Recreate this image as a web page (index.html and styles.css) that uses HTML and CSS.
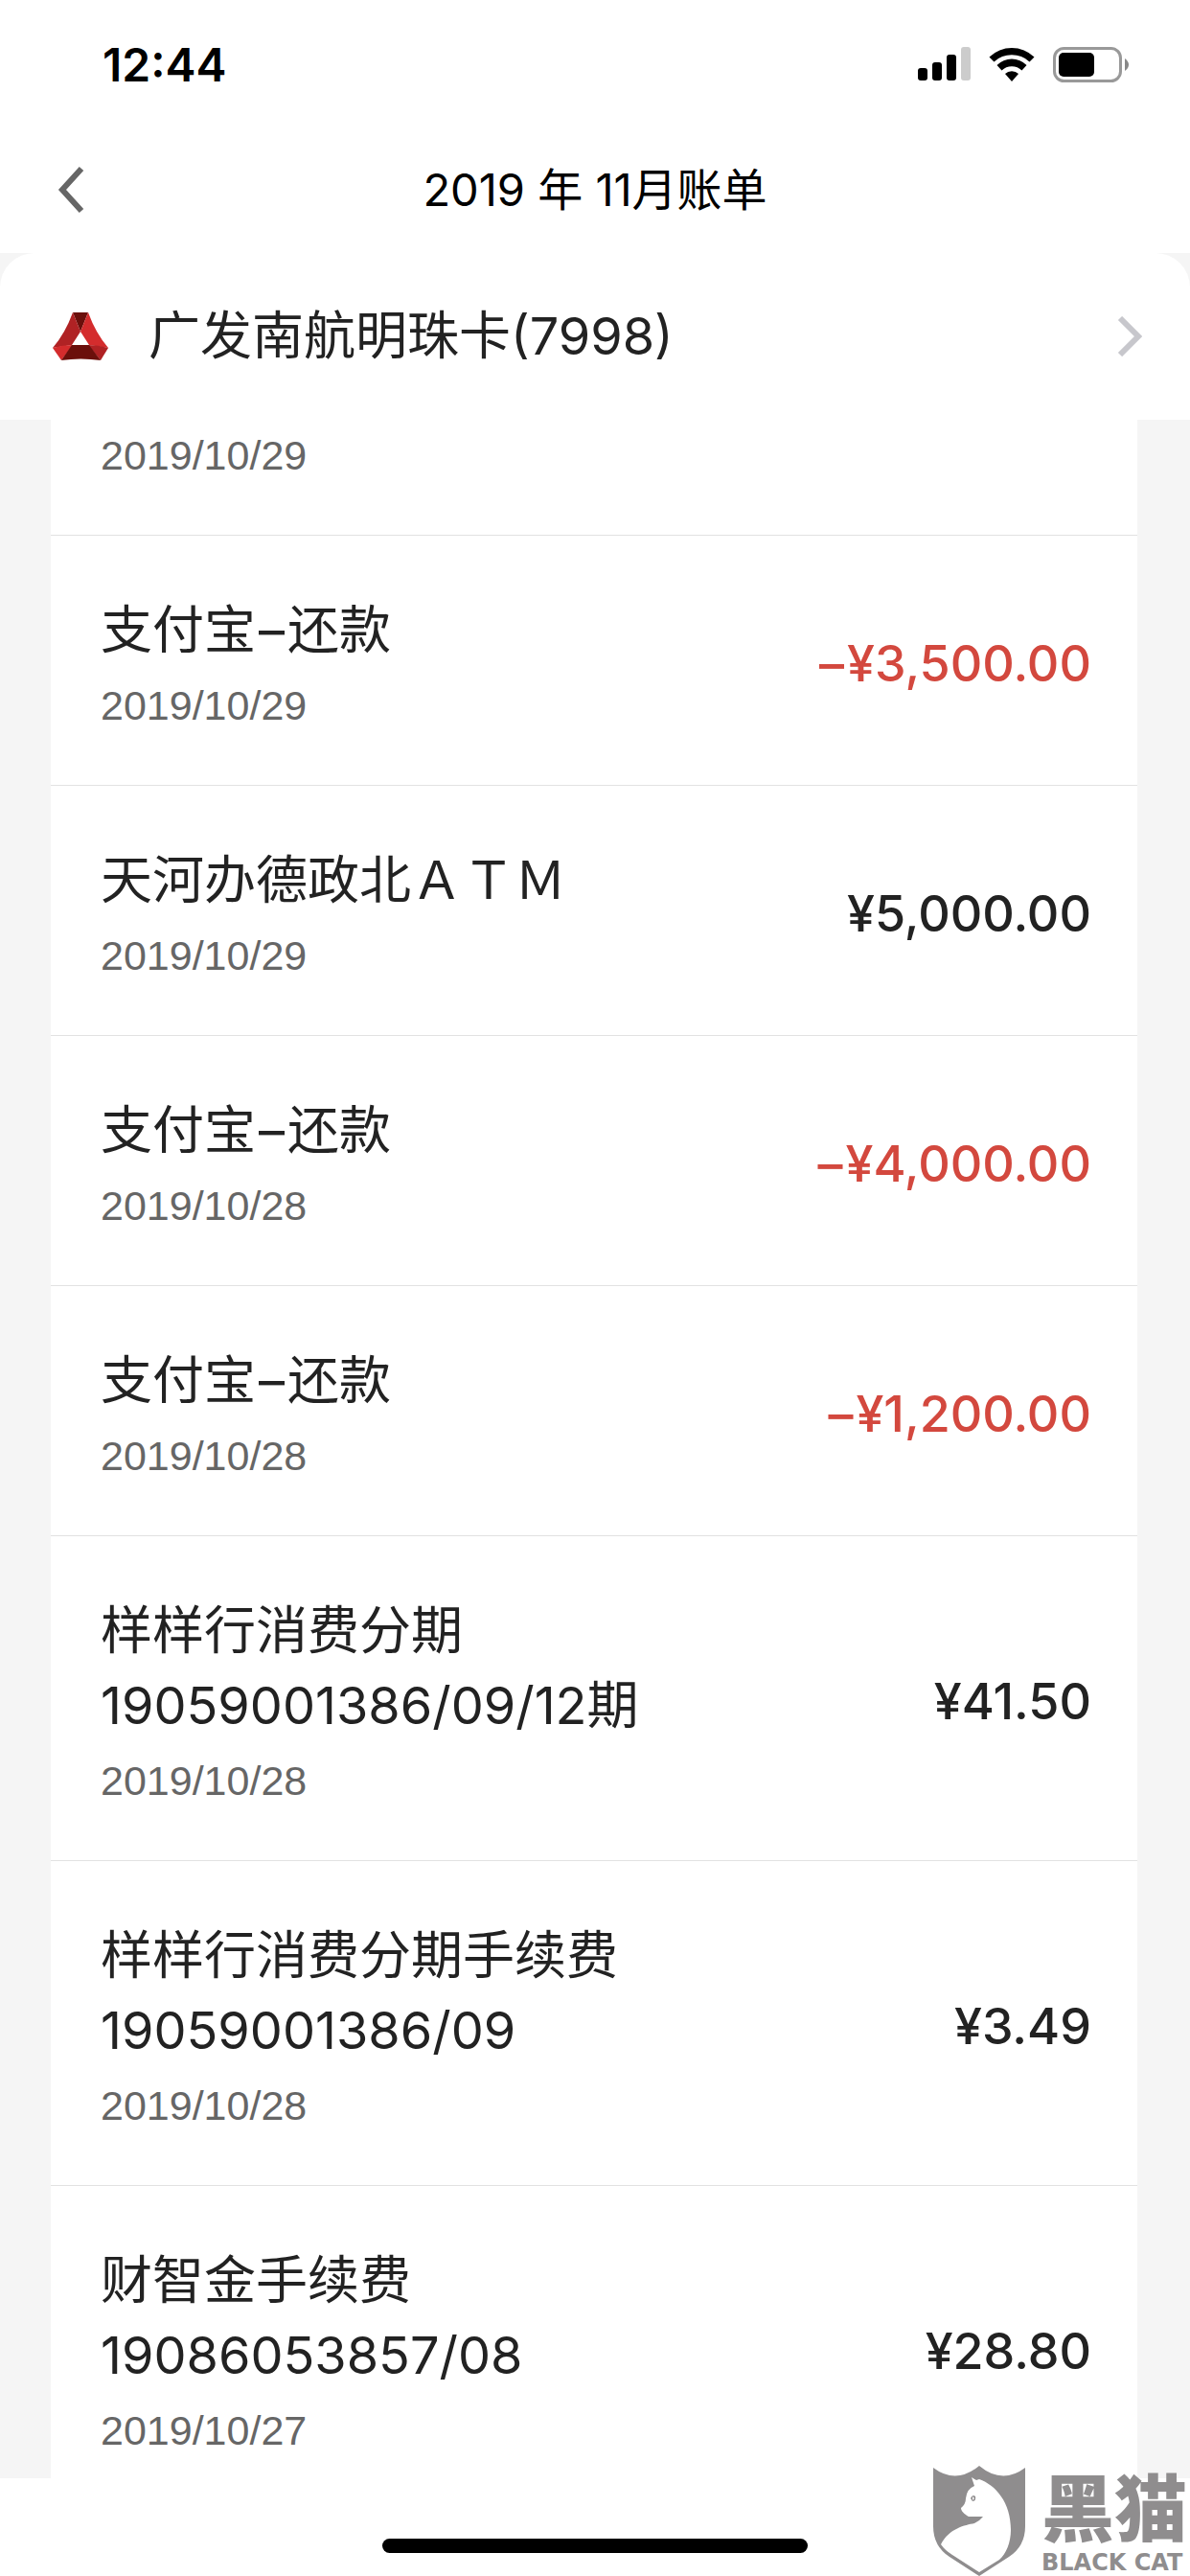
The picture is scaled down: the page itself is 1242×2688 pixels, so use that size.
FILE: index.html
```html
<!DOCTYPE html>
<html lang="zh-CN">
<head>
    <meta charset="UTF-8">
    <meta name="viewport" content="width=device-width, initial-scale=1.0">
    <title>2019年11月账单</title>
    <link rel="stylesheet" href="styles.css">
</head>
<body>
    <div class="status-bar">
        <span class="time">12:44</span>
        <div class="status-icons">
            <svg class="signal" width="55" height="36" viewBox="0 0 55 36">
                <rect x="0" y="22" width="10" height="13" rx="3"/>
                <rect x="15" y="16" width="10" height="19" rx="3"/>
                <rect x="30" y="8" width="10" height="27" rx="3"/>
                <rect x="45" y="0" width="10" height="35" rx="3" fill="#ccc"/>
            </svg>
            <svg class="wifi" width="48" height="36" viewBox="0 0 48 36">
                <path d="M0.500 10.500 A34 34 0 0 1 47.500 10.500 L42.500 15.500 A27 27 0 0 0 5.500 15.500 Z"/>
                <path d="M8.500 19 A22 22 0 0 1 39.500 19 L34.500 24.500 A15 15 0 0 0 13.500 24.500 Z"/>
                <path d="M17 28 A10 10 0 0 1 31 28 L24 36 Z"/>
            </svg>
            <svg class="battery" width="80" height="37" viewBox="0 0 80 37">
                <rect x="1.500" y="1.500" width="69" height="34" rx="10" fill="none" stroke="#999" stroke-width="3"/>
                <rect x="6" y="6" width="37" height="25" rx="5"/>
                <path d="M75 12 Q79 15 79 18.500 Q79 22 75 25 Z" fill="#888"/>
            </svg>
        </div>
    </div>

    <header class="nav-bar">
        <button class="back" type="button" aria-label="返回">
            <svg width="28" height="48" viewBox="0 0 28 48">
                <path d="M25 2 L5 24 L25 46" fill="none" stroke="#666" stroke-width="6"/>
            </svg>
        </button>
        <h1>2019 年 11月账单</h1>
    </header>

    <main class="content">
        <a class="card" href="#">
            <svg class="bank-logo" width="58" height="50" viewBox="0 0 58 50">
                <path d="M21 0 L37 0 L29 20 Z" fill="#6b0f0b"/>
                <path d="M21 0 L29 20 L20 34 L0 37 Q13 22 21 0 Z" fill="#b02224"/>
                <path d="M37 0 Q45 22 58 37 L38 34 L29 20 Z" fill="#d42c2d"/>
                <path d="M0 37 Q10 34 21 34 L9 50 Z" fill="#d42c2d"/>
                <path d="M58 37 Q48 34 37 34 L50 50 Z" fill="#b02224"/>
                <path d="M20 34 L38 34 L50 50 Q29 47 9 50 Z" fill="#6b0f0b"/>
            </svg>
            <span class="card-name">广发南航明珠卡(7998)</span>
            <svg class="arrow" width="26" height="42" viewBox="0 0 26 42">
                <path d="M3 2 L22 21 L3 40" fill="none" stroke="#c7c7cc" stroke-width="6"/>
            </svg>
        </a>

        <ul class="bill-list">
            <li class="bill first">
                <div class="info">
                    <div class="date">2019/10/29</div>
                </div>
            </li>
            <li class="bill">
                <div class="info">
                    <div class="name">支付宝<span class="dash">–</span>还款</div>
                    <div class="date">2019/10/29</div>
                </div>
                <div class="amount refund"><span class="dash">–</span>¥3,500.00</div>
            </li>
            <li class="bill">
                <div class="info">
                    <div class="name">天河办德政北ＡＴＭ</div>
                    <div class="date">2019/10/29</div>
                </div>
                <div class="amount">¥5,000.00</div>
            </li>
            <li class="bill">
                <div class="info">
                    <div class="name">支付宝<span class="dash">–</span>还款</div>
                    <div class="date">2019/10/28</div>
                </div>
                <div class="amount refund"><span class="dash">–</span>¥4,000.00</div>
            </li>
            <li class="bill">
                <div class="info">
                    <div class="name">支付宝<span class="dash">–</span>还款</div>
                    <div class="date">2019/10/28</div>
                </div>
                <div class="amount refund"><span class="dash">–</span>¥1,200.00</div>
            </li>
            <li class="bill">
                <div class="info">
                    <div class="name">样样行消费分期<br>19059001386/09/12期</div>
                    <div class="date">2019/10/28</div>
                </div>
                <div class="amount">¥41.50</div>
            </li>
            <li class="bill">
                <div class="info">
                    <div class="name">样样行消费分期手续费<br>19059001386/09</div>
                    <div class="date">2019/10/28</div>
                </div>
                <div class="amount">¥3.49</div>
            </li>
            <li class="bill">
                <div class="info">
                    <div class="name">财智金手续费<br>19086053857/08</div>
                    <div class="date">2019/10/27</div>
                </div>
                <div class="amount">¥28.80</div>
            </li>
        </ul>
    </main>

    <footer class="home-bar">
        <div class="home-indicator"></div>
    </footer>

    <div class="watermark">
        <svg width="98" height="115" viewBox="0 0 98 115">
            <path d="M1 2 Q25 20 49 0 Q73 20 97 2 L97 63 Q97 84 80 95 L49 115 L18 95 Q1 84 1 63 Z" fill="#8f8d8e"/>
            <path d="M41 12 L46 15 L49 14 C66 20 82 38 82 67 C82 80 77 92 70 98 L49 111 L21 93 Q13 88 9 82 C18 65 34 62 44 60 Q50 57 53 53 L38 53 C33 50 30 47 30 44 Q35 40 35 34 Q36 24 44 21 Z" fill="#fff"/>
            <path d="M40 34 Q42 29 45 32 Q46 37 42 37 Z" fill="#8f8d8e"/>
            <path d="M42 32 L44 34 L42 36 Z" fill="#fff"/>
        </svg>
        <div class="brand">
            <span class="brand-cn">黑猫</span>
            <span class="brand-en">BLACK CAT</span>
        </div>
    </div>
</body>
</html>
```
FILE: styles.css
```css
* {
    box-sizing: border-box;
}
body {
    position: relative;
    margin: 0;
    background-color: #fff;
    color: #222;
    font-family: Inter, "Noto Sans CJK SC", sans-serif;
}
.status-bar {
    display: flex;
    align-items: center;
    justify-content: space-between;
    height: 134px;
    padding: 0 63px 0 107px;
    color: #000;
}
.time {
    font-size: 48px;
    font-weight: 600;
}
.status-icons {
    display: flex;
    align-items: center;
    gap: 19px;
}
.nav-bar {
    display: grid;
    grid-template-columns: 100px 1fr 100px;
    align-items: center;
    height: 130px;
    padding-bottom: 2px;
    color: #000;
}
.back {
    padding: 0 0 0 60px;
    border: none;
    background: none;
    text-align: left;
    cursor: pointer;
}
.back svg {
    display: block;
}
.nav-bar h1 {
    margin: 0;
    font-size: 47px;
    font-weight: 400;
    line-height: 60px;
    text-align: center;
}
.content {
    background-color: #f5f5f5;
}
.card {
    display: flex;
    align-items: center;
    height: 174px;
    padding: 0 50px 0 55px;
    border-radius: 36px 36px 0 0;
    background-color: #fff;
    color: #222;
    text-decoration: none;
}
.card-name {
    flex: 1;
    margin-left: 42px;
    font-size: 54px;
    line-height: 78px;
}
.bill-list {
    margin: 0 55px 0 53px;
    padding: 0;
    background-color: #fff;
    list-style: none;
}
.bill {
    display: flex;
    align-items: center;
    justify-content: space-between;
    padding: 60px 48px 53px 52px;
    border-bottom: 1px solid #e2e2e2;
}
.bill.first {
    padding-top: 7px;
}
.bill:last-child {
    padding-bottom: 20px;
    border-bottom: none;
}
.name {
    margin-bottom: 9px;
    font-size: 54px;
    line-height: 78px;
}
.dash {
    margin: 0 3px;
}
.date {
    color: #666;
    font-family: "Liberation Sans", Arial, sans-serif;
    font-size: 43px;
    line-height: 60px;
}
.amount {
    font-size: 52px;
    font-weight: 500;
    line-height: 78px;
}
.refund {
    color: #d3483e;
}
.home-bar {
    padding: 63px 0 24px;
}
.home-indicator {
    width: 444px;
    height: 15px;
    margin: 0 auto;
    border-radius: 8px;
    background-color: #000;
}
.watermark {
    position: absolute;
    right: 0;
    bottom: 0;
    display: flex;
    gap: 16px;
    color: #8f8d8e;
}
.brand {
    display: flex;
    flex-direction: column;
    gap: 8px;
    width: 155px;
    white-space: nowrap;
}
.brand-cn {
    font-family: "Noto Sans CJK SC", sans-serif;
    font-size: 76px;
    font-weight: 900;
    line-height: 80px;
}
.brand-en {
    font-family: "DejaVu Sans", sans-serif;
    font-size: 24px;
    font-weight: 700;
    line-height: 26px;
}
```
